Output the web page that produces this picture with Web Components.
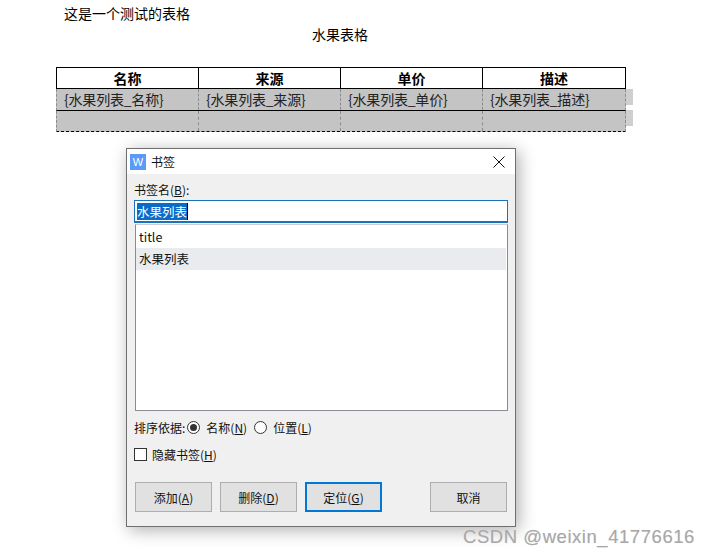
<!DOCTYPE html>
<html>
<head>
<meta charset="utf-8">
<title>书签</title>
<style>
  html, body { margin: 0; background: #fff; }
  body { width: 710px; height: 556px; overflow: hidden; position: relative; font-family: "Noto Sans CJK SC", "Liberation Sans", sans-serif; color: #000; }
</style>
</head>
<body>
<doc-page>
  <span slot="intro">这是一个测试的表格</span>
  <span slot="title">水果表格</span>
  <fruit-table></fruit-table>
</doc-page>

<bookmark-dialog></bookmark-dialog>

<water-mark>CSDN @weixin_41776616</water-mark>

<script>
class DocPage extends HTMLElement {
  connectedCallback() {
    this.attachShadow({ mode: 'open' });
    this.shadowRoot.innerHTML = `
      <style>
        :host { display: block; width: 570px; padding: 4px 0 0 56px; font-size: 14px; }
        .intro { height: 19px; line-height: 19px; padding-left: 8px; }
        .title { height: 22px; line-height: 22px; text-align: center; width: 568px; }
        .spacer { height: 22px; }
      </style>
      <div class="intro"><slot name="intro"></slot></div>
      <div class="title"><slot name="title"></slot></div>
      <div class="spacer"></div>
      <slot></slot>
    `;
  }
}
customElements.define('doc-page', DocPage);

class FruitTable extends HTMLElement {
  connectedCallback() {
    this.attachShadow({ mode: 'open' });
    const heads = ['名称', '来源', '单价', '描述'];
    this.shadowRoot.innerHTML = `
      <style>
        :host { display: block; width: 570px; position: relative; }
        .row { display: grid; grid-template-columns: 141px 142px 142px 143px; box-sizing: border-box; }
        .head { height: 22px; border: 1px solid #000; background: #fff; }
        .head div { font-weight: bold; text-align: center; line-height: 20px; font-size: 14px; border-left: 1px solid #000; }
        .head div:first-child { border-left: 0; }
        .body { background: #c4c4c4; border-right: 1px dashed #8c8c8c; border-left: 1px dashed #8c8c8c; }
        .body div { border-left: 1px dashed #8c8c8c; padding-left: 7px; font-size: 14px; letter-spacing: -.2px; color: #222; white-space: nowrap; }
        .body div:first-child { border-left: 0; }
        .one { height: 22px; line-height: 21px; border-bottom: 1px solid #000; }
        .two { height: 21px; border-bottom: 1px dashed #000; }
        .tab { position: absolute; left: 570px; width: 7px; background: #cfcfcf; }
      </style>
      <div class="row head">${heads.map(h => `<div>${h}</div>`).join('')}</div>
      <div class="row body one">${heads.map(h => `<div>{水果列表_${h}}</div>`).join('')}</div>
      <div class="row body two"><div></div><div></div><div></div><div></div></div>
      <div class="tab" style="top:22px;height:16px"></div>
      <div class="tab" style="top:43px;height:16px"></div>
    `;
  }
}
customElements.define('fruit-table', FruitTable);

class DlgButton extends HTMLElement {
  connectedCallback() {
    this.attachShadow({ mode: 'open' });
    this.shadowRoot.innerHTML = `
      <style>
        :host { display: flex; align-items: center; justify-content: center; box-sizing: border-box; width: 77px; height: 30px;
          background: #e1e1e1; border: 1px solid #adadad; font-size: 12px; color: #111; }
        :host([primary]) { border: 2px solid #0078d7; }
      </style>
      <slot></slot>
    `;
  }
}
customElements.define('dlg-button', DlgButton);

class DlgRadio extends HTMLElement {
  connectedCallback() {
    this.attachShadow({ mode: 'open' });
    this.shadowRoot.innerHTML = `
      <style>
        :host { display: inline-flex; align-items: center; gap: 6px; font-size: 12px; color: #111; }
        .dot { box-sizing: border-box; width: 13px; height: 13px; border: 1px solid #333; border-radius: 50%; display: flex; align-items: center; justify-content: center; background: #fff; }
        :host([checked]) .dot::after { content: ''; width: 7px; height: 7px; border-radius: 50%; background: #333; }
      </style>
      <span class="dot"></span><span><slot></slot></span>
    `;
  }
}
customElements.define('dlg-radio', DlgRadio);

class BookmarkDialog extends HTMLElement {
  connectedCallback() {
    this.attachShadow({ mode: 'open' });
    this.shadowRoot.innerHTML = `
      <style>
        :host { display: block; position: absolute; left: 126px; top: 148px; width: 390px; height: 379px; box-sizing: border-box;
          border: 1px solid #6f6f6f; background: #f0f0f0; box-shadow: 3px 3px 16px rgba(0,0,0,.32);
          font-size: 12px; color: #111; }
        u { text-decoration-thickness: 1px; text-underline-offset: 1px; }
        .bar { height: 25px; background: #fff; display: flex; align-items: center; padding: 0 8px 0 3px; }
        .logo { width: 16px; height: 16px; background: #5a9bf7; color: #fff; font: 11px/16px "Liberation Sans", sans-serif; text-align: center; }
        .cap { margin-left: 5px; flex: 1; }
        .x { width: 12px; height: 12px; margin-right: 2px; }
        .main { padding: 5px 7px 0 7px; display: flex; flex-direction: column; }
        .lab { height: 21px; line-height: 21px; }
        .input { box-sizing: border-box; height: 23px; width: 374px; background: #fff; border: 1px solid #1a72bb; border-bottom-width: 2px; padding: 2px 0 0 2px; display: flex; }
        .sel { background: #0a6cc8; color: #fff; font-size: 12.5px; height: 17px; line-height: 17px; width: 50px; white-space: nowrap; border-right: 1px solid #000; }
        .list { box-sizing: border-box; margin: 1px 0 0 1px; width: 373px; height: 187px; background: #fff; border: 1px solid #8b8b96; border-top-color: #ccc; padding-top: 1px; }
        .item { height: 22px; line-height: 22px; padding-left: 3px; font-size: 12.5px; }
        .item.hot { background: #e9ebee; margin-right: 1px; }
        .sort { display: flex; align-items: center; height: 18px; margin-top: 7px; }
        .sort dlg-radio { margin-left: 2px; }
        .sort dlg-radio + dlg-radio { margin-left: 7px; }
        .hide { display: flex; align-items: center; gap: 5px; height: 18px; margin-top: 9px; }
        .box { box-sizing: border-box; width: 13px; height: 13px; border: 1px solid #333; background: #fff; }
        .btns { display: flex; gap: 8px; margin: 19px 0 0 1px; }
        .btns .last { margin-left: 40px; }
      </style>
      <div class="bar">
        <div class="logo">W</div>
        <div class="cap">书签</div>
        <svg class="x" viewBox="0 0 12 12"><path d="M.5.5l11 11M11.500.5l-11 11" stroke="#111" fill="none"/></svg>
      </div>
      <div class="main">
        <div class="lab">书签名(<u>B</u>):</div>
        <div class="input"><div class="sel">水果列表</div></div>
        <div class="list">
          <div class="item">title</div>
          <div class="item hot">水果列表</div>
        </div>
        <div class="sort">
          <span>排序依据:</span>
          <dlg-radio checked>名称(<u>N</u>)</dlg-radio>
          <dlg-radio>位置(<u>L</u>)</dlg-radio>
        </div>
        <div class="hide"><span class="box"></span><span>隐藏书签(<u>H</u>)</span></div>
        <div class="btns">
          <dlg-button>添加(<u>A</u>)</dlg-button>
          <dlg-button>删除(<u>D</u>)</dlg-button>
          <dlg-button primary>定位(<u>G</u>)</dlg-button>
          <dlg-button class="last">取消</dlg-button>
        </div>
      </div>
    `;
  }
}
customElements.define('bookmark-dialog', BookmarkDialog);

class WaterMark extends HTMLElement {
  connectedCallback() {
    this.attachShadow({ mode: 'open' });
    this.shadowRoot.innerHTML = `
      <style>
        :host { display: block; position: absolute; left: 463px; top: 526px; font: 18.500px/22px "Liberation Sans", sans-serif; color: #a8a8a8; letter-spacing: .55px; white-space: nowrap; text-shadow: 0 0 1px #ddd; }
      </style>
      <slot></slot>
    `;
  }
}
customElements.define('water-mark', WaterMark);
</script>
</body>
</html>
